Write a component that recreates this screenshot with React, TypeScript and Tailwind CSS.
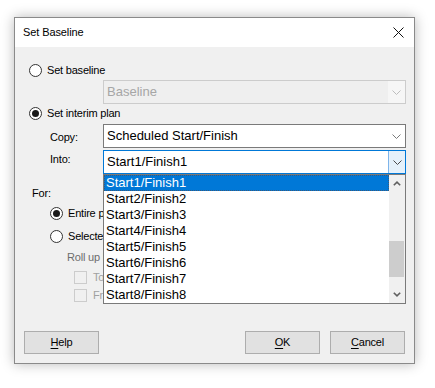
import React from "react";

const ui = { fontFamily: '"Liberation Sans", Arial, sans-serif' };

const items = [1, 2, 3, 4, 5, 6, 7, 8].map((n) => `Start${n}/Finish${n}`);

function Chevron({ color = "#7a7a7a" }: { color?: string }) {
  return (
    <svg width="9" height="5" viewBox="0 0 9 5">
      <path d="M0.5 0.5 L4.5 4.5 L8.5 0.5" fill="none" stroke={color} strokeWidth="1" />
    </svg>
  );
}

function Radio({ checked }: { checked?: boolean }) {
  return (
    <span className="flex h-[13px] w-[13px] shrink-0 items-center justify-center rounded-full border border-[#333333] bg-white">
      {checked && <span className="h-[7px] w-[7px] rounded-full bg-[#1a1a1a]" />}
    </span>
  );
}

function Checkbox() {
  return <span className="block h-[13px] w-[13px] shrink-0 border border-[#cccccc] bg-[#f0f0f0]" />;
}

function Button({ label, mnemonic }: { label: string; mnemonic: number }) {
  return (
    <button className="flex h-[23px] w-[75px] items-center justify-center border border-[#adadad] bg-[#e1e1e1] text-[11px] text-black">
      {label.slice(0, mnemonic)}
      <span className="underline underline-offset-2">{label[mnemonic]}</span>
      {label.slice(mnemonic + 1)}
    </button>
  );
}

// rows that run under the open list are clipped at its left edge
const clipped = "w-[88px] overflow-hidden whitespace-nowrap";

export default function App() {
  return (
    <div className="h-[388px] w-[435px] bg-white pl-[14px] pt-[17px]" style={ui}>
      <div className="flex h-[347px] w-[401px] flex-col border border-[#8a8a8a] bg-[#f0f0f0] shadow-[0_0_12px_rgba(0,0,0,0.28)]">
        <div className="flex h-[29px] items-center justify-between bg-white pl-[8px] pr-[10px]">
          <span className="text-[11px] tracking-[-0.1px] text-black">Set Baseline</span>
          <svg width="11" height="11" viewBox="0 0 11 11">
            <path d="M0.5 0.5 L10.5 10.5 M10.5 0.5 L0.5 10.5" stroke="#111" strokeWidth="1" />
          </svg>
        </div>

        <div className="relative flex flex-1 flex-col text-[11px] tracking-[-0.2px] text-black">
          <div className="mt-[16px] flex h-[14px] items-center gap-[5px] pl-[14px]">
            <Radio />
            <span>Set baseline</span>
          </div>

          <div className="ml-[88px] mt-[3px] flex h-[24px] w-[303px] items-center border border-[#cccccc] bg-[#efefef] text-[13px] tracking-normal text-[#a6a6a6]">
            <span className="flex-1 pl-[3px]">Baseline</span>
            <span className="flex h-full w-[17px] items-center justify-center bg-[#f6f6f6]">
              <Chevron color="#bdbdbd" />
            </span>
          </div>

          <div className="mt-[2px] flex h-[14px] items-center gap-[5px] pl-[14px]">
            <Radio checked />
            <span>Set interim plan</span>
          </div>

          <div className="mt-[4px] flex h-[24px] pl-[35px]">
            <span className="w-[53px] pt-[5px]">Copy:</span>
            <div className="flex w-[303px] items-center border border-[#7a7a7a] bg-white text-[13px] tracking-normal">
              <span className="flex-1 pl-[3px]">Scheduled Start/Finish</span>
              <span className="flex h-full w-[17px] items-center justify-center">
                <Chevron />
              </span>
            </div>
          </div>

          <div className="mt-[2px] flex h-[24px] pl-[35px]">
            <span className="w-[53px] pt-[1px]">Into:</span>
            <div className="flex w-[303px] items-center border border-[#0078d7] bg-white text-[13px] tracking-normal">
              <span className="flex-1 pl-[3px]">Start1/Finish1</span>
              <span className="flex h-full w-[17px] items-center justify-center border-l border-[#7eb4ea] bg-[#e5f1fb]">
                <Chevron color="#4a4a4a" />
              </span>
            </div>
          </div>

          <div className="mt-[12px] flex h-[14px] items-center pl-[17px]">For:</div>

          <div className={`mt-[6px] flex h-[14px] items-center gap-[5px] pl-[35px] ${clipped}`}>
            <Radio checked />
            <span>Entire project</span>
          </div>

          <div className={`mt-[9px] flex h-[14px] items-center gap-[5px] pl-[35px] ${clipped}`}>
            <Radio />
            <span>Selected tasks</span>
          </div>

          <div className={`mt-[7px] flex h-[14px] items-center pl-[52px] text-[#6d6d6d] ${clipped}`}>
            Roll up baselines:
          </div>

          <div className={`mt-[7px] flex h-[13px] items-center gap-[6px] pl-[59px] text-[#a0a0a0] ${clipped}`}>
            <Checkbox />
            <span>To all summary tasks</span>
          </div>

          <div className={`mt-[5px] flex h-[13px] items-center gap-[6px] pl-[59px] text-[#a0a0a0] ${clipped}`}>
            <Checkbox />
            <span>From subtasks into selected summary task(s)</span>
          </div>

          <div className="mt-[29px] flex items-center justify-between pl-[9px] pr-[9px]">
            <Button label="Help" mnemonic={0} />
            <div className="flex gap-[10px]">
              <Button label="OK" mnemonic={0} />
              <Button label="Cancel" mnemonic={0} />
            </div>
          </div>

          <div className="absolute left-[88px] top-[127px] flex h-[130px] w-[303px] border border-[#7a7a7a] bg-white text-[13px] tracking-normal">
            <div className="flex flex-1 flex-col">
              {items.map((item, i) => (
                <div
                  key={item}
                  className={
                    i === 0
                      ? "flex h-[16px] items-center border border-dotted border-[#3c5a7a] bg-[#0078d7] pl-[1px] text-white"
                      : "flex h-[16px] items-center pl-[2px] text-black"
                  }
                >
                  {item}
                </div>
              ))}
            </div>
            <div className="relative flex w-[16px] flex-col items-center bg-[#f0f0f0]">
              <svg className="mt-[6px]" width="8" height="5" viewBox="0 0 8 5">
                <path d="M0.8 4.3 L4 1.2 L7.2 4.3" fill="none" stroke="#606060" strokeWidth="1.6" />
              </svg>
              <div className="absolute left-0 top-[66px] h-[36px] w-[15px] bg-[#cdcdcd]" />
              <svg className="mt-auto mb-[6px]" width="8" height="5" viewBox="0 0 8 5">
                <path d="M0.8 0.7 L4 3.8 L7.2 0.7" fill="none" stroke="#606060" strokeWidth="1.6" />
              </svg>
            </div>
          </div>
        </div>
      </div>
    </div>
  );
}
